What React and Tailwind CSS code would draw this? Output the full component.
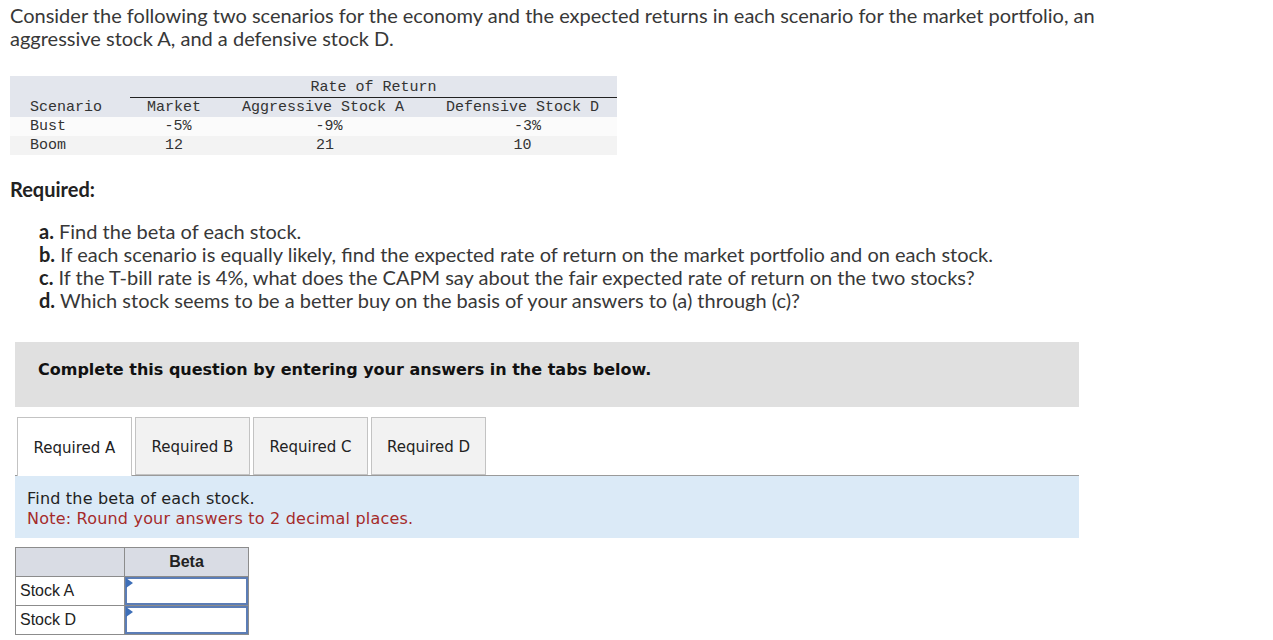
import React from "react";

const mono = { fontFamily: '"Liberation Mono", "DejaVu Sans Mono", monospace' };

function Tab({ label, active }) {
  return (
    <div
      className={
        "flex h-[58px] w-[115px] items-center justify-center border border-[#c3c3c3] pt-[2px] text-[15px] text-[#222] " +
        (active ? "relative z-10 -mb-px h-[59px] border-b-0 bg-white" : "bg-[#f2f2f2]")
      }
    >
      {label}
    </div>
  );
}

function InputCell() {
  return (
    <td className="border border-[#8c8c8c] p-0">
      <div className="relative h-[28px] border-2 border-[#5b7db6] bg-white">
        <div className="absolute -left-px -top-px h-0 w-0 border-b-[5px] border-l-[7px] border-t-[5px] border-b-transparent border-l-[#3e6fb8] border-t-transparent" />
      </div>
    </td>
  );
}

export default function App() {
  return (
    <div className="min-h-[640px] w-[1273px] bg-white text-[#333]">
      <div className="pl-[10px] font-['Lato',sans-serif] text-[20px] leading-[23px] text-[#383838]">
        <p className="pt-[4px]">
          Consider the following two scenarios for the economy and the expected returns in each scenario for the market portfolio, an
          <br />
          aggressive stock A, and a defensive stock D.
        </p>

        <table className="mt-[26px] w-[607px] border-collapse text-[15px] leading-[19px] text-[#333]" style={mono}>
          <tbody>
            <tr className="bg-[#e3e6ed]">
              <td className="w-[120px] p-0"></td>
              <td colSpan={3} className="border-b border-[#222] p-0 pt-[2px] text-center">
                Rate of Return
              </td>
            </tr>
            <tr className="bg-[#e3e6ed]">
              <td className="p-0 pl-[20px]">Scenario</td>
              <td className="w-[88px] p-0 text-center">Market</td>
              <td className="w-[210px] p-0 text-center">Aggressive Stock A</td>
              <td className="p-0 text-center">Defensive Stock D</td>
            </tr>
            <tr className="bg-[#fbfbfb]">
              <td className="p-0 pl-[20px]">Bust</td>
              <td className="p-0 pl-[8px] text-center">-5%</td>
              <td className="p-0 pl-[12px] text-center">-9%</td>
              <td className="p-0 pl-[10px] text-center">-3%</td>
            </tr>
            <tr className="bg-[#f3f3f3]">
              <td className="p-0 pl-[20px]">Boom</td>
              <td className="p-0 text-center">12</td>
              <td className="p-0 pl-[4px] text-center">21</td>
              <td className="p-0 text-center">10</td>
            </tr>
          </tbody>
        </table>

        <p className="mt-[23px] text-[20px] font-bold leading-[22px] text-[#222]">Required:</p>

        <div className="mt-[20px] pl-[29px]">
          <p>
            <b className="text-[#222]">a.</b> Find the beta of each stock.
          </p>
          <p>
            <b className="text-[#222]">b.</b> If each scenario is equally likely, find the expected rate of return on the market portfolio and on each stock.
          </p>
          <p>
            <b className="text-[#222]">c.</b> If the T-bill rate is 4%, what does the CAPM say about the fair expected rate of return on the two stocks?
          </p>
          <p>
            <b className="text-[#222]">d.</b> Which stock seems to be a better buy on the basis of your answers to (a) through (c)?
          </p>
        </div>
      </div>

      <div className="ml-[15px] w-[1064px] font-['DejaVu_Sans',sans-serif]">
        <div className="mt-[30px] h-[65px] bg-[#e0e0e0] pl-[23px] pt-[17px] text-[16px] font-bold leading-[22px] text-[#111]">
          Complete this question by entering your answers in the tabs below.
        </div>

        <div className="mt-[10px] flex items-end gap-[3px] pl-[2px]">
          <Tab label="Required A" active />
          <Tab label="Required B" />
          <Tab label="Required C" />
          <Tab label="Required D" />
        </div>
        <div className="border-t border-[#9a9a9a]" />

        <div className="h-[62px] bg-[#dbeaf7] pl-[12px] pt-[13px] text-[16px] leading-[20px] tracking-[0.2px] text-[#222]">
          <p>Find the beta of each stock.</p>
          <p className="text-[#a52a2a]">Note: Round your answers to 2 decimal places.</p>
        </div>

        <table className="mt-[9px] border-collapse font-['Liberation_Sans',sans-serif] text-[16px] text-[#222]">
          <tbody>
            <tr className="h-[29px] bg-[#d9dce4]">
              <td className="w-[109px] border border-[#8c8c8c] p-0"></td>
              <td className="w-[124px] border border-[#8c8c8c] p-0 text-center font-bold">Beta</td>
            </tr>
            <tr className="h-[29px]">
              <td className="border border-[#8c8c8c] p-0 pl-[4px]">Stock A</td>
              <InputCell />
            </tr>
            <tr className="h-[29px]">
              <td className="border border-[#8c8c8c] p-0 pl-[4px]">Stock D</td>
              <InputCell />
            </tr>
          </tbody>
        </table>
      </div>
    </div>
  );
}
